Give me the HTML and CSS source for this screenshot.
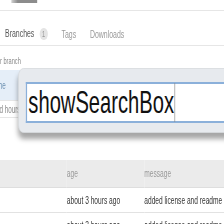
FILE: index.html
```html
<!DOCTYPE html>
<html lang="en">

<head>
    <meta charset="UTF-8">
    <title>Branches</title>
    <link rel="stylesheet" href="styles.css">
</head>

<body>
    <div class="page">
        <div class="topbar">
            <span class="topbar-tab"></span>
        </div>

        <nav class="tabs">
            <a href="#" class="tab current">Branches <span class="badge">1</span></a>
            <a href="#" class="tab">Tags</a>
            <a href="#" class="tab">Downloads</a>
        </nav>

        <div class="filter">Filter branch</div>

        <ul class="branch-list">
            <li class="branch active">the</li>
            <li class="branch">ed hours</li>
        </ul>

        <table class="commits">
            <thead>
                <tr>
                    <th class="col-name"></th>
                    <th class="col-age">age</th>
                    <th>message</th>
                </tr>
            </thead>
            <tbody>
                <tr>
                    <td></td>
                    <td>about 3 hours ago</td>
                    <td>added license and readme</td>
                </tr>
                <tr>
                    <td></td>
                    <td>about 3 hours ago</td>
                    <td>added license and readme</td>
                </tr>
            </tbody>
        </table>

        <!-- search popup -->
        <div class="search-popup">
            <div class="search-box"><span class="search-text">showSearchBox</span></div>
        </div>
    </div>
</body>

</html>
```

FILE: styles.css
```css
* {
    margin: 0;
    padding: 0;
    box-sizing: border-box;
}

body {
    background: #fff;
    font-family: 'Liberation Sans', Arial, sans-serif;
    color: #333;
    overflow: hidden;
}

.page {
    position: relative;
    width: 356px;
    height: 224px;
    transform: scaleX(0.63);
    transform-origin: 0 0;
}

.topbar {
    height: 11px;
    border-bottom: 1px solid #e6e6e6;
    padding-left: 18px;
}

.topbar-tab {
    display: block;
    width: 41px;
    height: 3px;
    background: linear-gradient(to right, #d0d0d0, #8c8c8c 25%, #8c8c8c);
}

.tabs {
    display: flex;
    align-items: center;
    gap: 22px;
    height: 35px;
    padding: 11px 0 0 8px;
    border-bottom: 1px solid #e6e6e6;
}

.tab {
    font-size: 11px;
    color: #999;
    text-decoration: none;
}

.tab.current {
    color: #555;
}

.badge {
    display: inline-block;
    margin-left: 5px;
    padding: 0 4px;
    border-radius: 7px;
    background: #e4e4e4;
    color: #999;
    font-size: 9px;
    line-height: 12px;
}

.filter {
    margin: 10px 0 0 -17px;
    height: 13px;
    font-size: 9px;
    color: #888;
}

.branch-list {
    list-style: none;
    margin-top: 1px;
    width: 40px;
}

.branch {
    height: 17px;
    padding-top: 3px;
    font-size: 10px;
    color: #888;
    overflow: hidden;
    white-space: nowrap;
    border-bottom: 1px solid #e6e6e6;
}

.branch:last-child {
    text-indent: -7px;
}

.branch.active {
    height: 31px;
    padding-top: 10px;
    text-indent: -5px;
    background: #e5eef8;
    color: #6b8fb0;
}

.commits {
    margin-top: 42px;
    width: 100%;
    border-collapse: collapse;
    font-size: 10.5px;
}

.commits th {
    height: 27px;
    background: #ebebeb;
    font-weight: normal;
    color: #999;
    text-align: left;
    border-bottom: 1px solid #dedede;
}

.commits td {
    height: 25px;
    color: #333;
    white-space: nowrap;
    border-bottom: 1px solid #e2e2e2;
}

.col-name {
    width: 106px;
}

.col-age {
    width: 123px;
}

.search-popup {
    position: absolute;
    left: 29px;
    top: 68px;
    width: 360px;
    height: 65px;
    padding: 13px 0 0 11px;
    background: #e7eaee;
    border: 1px solid #d6dade;
    border-radius: 8px 0 0 8px;
    box-shadow: 0 6px 7px rgba(0, 0, 0, 0.35);
}

.search-box {
    height: 41px;
    padding-left: 2px;
    background: #fff;
    border: 2px solid #8bb0da;
    border-right: none;
    display: flex;
    align-items: center;
}

.search-text {
    font-size: 32px;
    color: #111;
    line-height: 39px;
    padding-right: 1px;
    border-right: 1px solid #888;
}
```
